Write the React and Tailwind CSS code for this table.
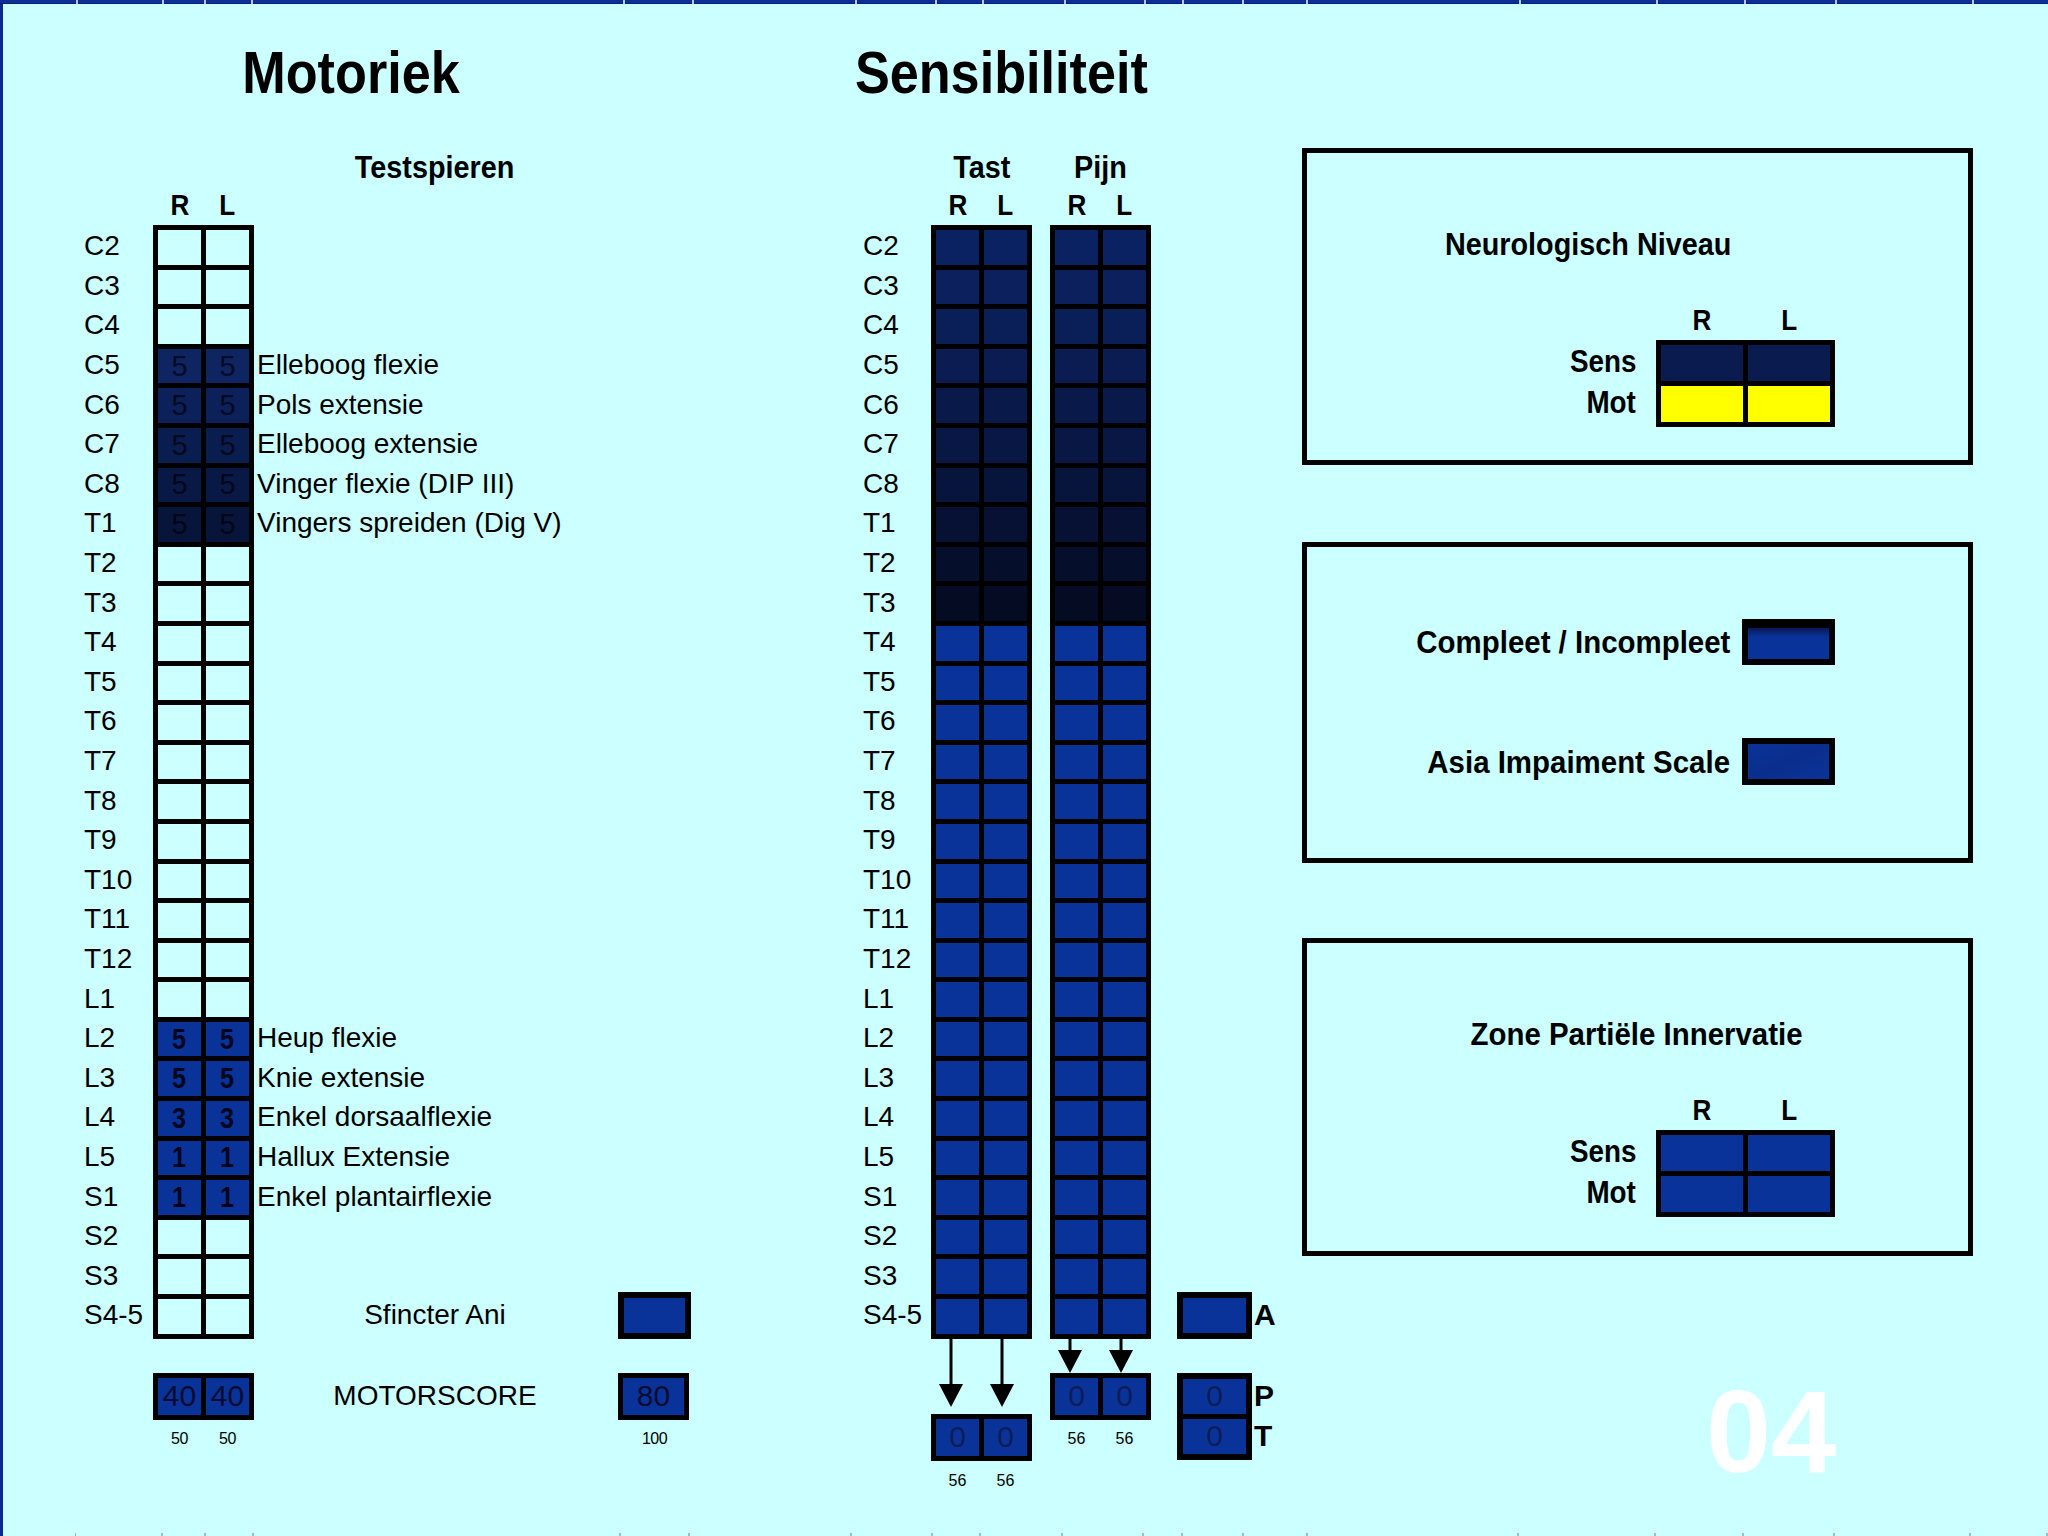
import React from 'react';

const BOLD = "font-['Liberation_Sans',Arial,sans-serif] font-bold";
const SANS = "font-['Liberation_Sans',Arial,sans-serif]";

const BLUE = 'bg-[#0a3399]';
const EMPTY = 'bg-[#ccffff]';

const LEVELS = [
  'C2', 'C3', 'C4', 'C5', 'C6', 'C7', 'C8',
  'T1', 'T2', 'T3', 'T4', 'T5', 'T6', 'T7', 'T8', 'T9', 'T10', 'T11', 'T12',
  'L1', 'L2', 'L3', 'L4', 'L5',
  'S1', 'S2', 'S3', 'S4-5',
];

// motor key muscles: value, name, cell colour
const MOTOR = {
  C5: { v: '5', name: 'Elleboog flexie', bg: 'bg-[#0e2562]', fg: 'text-[#040a26]' },
  C6: { v: '5', name: 'Pols extensie', bg: 'bg-[#0c2159]', fg: 'text-[#030922]' },
  C7: { v: '5', name: 'Elleboog extensie', bg: 'bg-[#0a1d4f]', fg: 'text-[#03081e]' },
  C8: { v: '5', name: 'Vinger flexie (DIP III)', bg: 'bg-[#081945]', fg: 'text-[#02061a]' },
  T1: { v: '5', name: 'Vingers spreiden (Dig V)', bg: 'bg-[#07153b]', fg: 'text-[#020516]' },
  L2: { v: '5', name: 'Heup flexie', bg: BLUE, fg: 'text-[#03061c]', bold: true },
  L3: { v: '5', name: 'Knie extensie', bg: BLUE, fg: 'text-[#03061c]', bold: true },
  L4: { v: '3', name: 'Enkel dorsaalflexie', bg: BLUE, fg: 'text-[#03061c]', bold: true },
  L5: { v: '1', name: 'Hallux Extensie', bg: BLUE, fg: 'text-[#03061c]', bold: true },
  S1: { v: '1', name: 'Enkel plantairflexie', bg: BLUE, fg: 'text-[#03061c]', bold: true },
};

// sensory cells get darker from C2 down to T3
const SENS_DARK = {
  C2: 'bg-[#0b2262]',
  C3: 'bg-[#0b205d]',
  C4: 'bg-[#0a1e57]',
  C5: 'bg-[#0a1c51]',
  C6: 'bg-[#09194a]',
  C7: 'bg-[#081743]',
  C8: 'bg-[#07143b]',
  T1: 'bg-[#061133]',
  T2: 'bg-[#050e2b]',
  T3: 'bg-[#040b23]',
};

// x positions of the little breaks in the top rule
const BREAKS = [76, 162, 204, 251, 623, 692, 855, 935, 982, 1064, 1144, 1182, 1242, 1306, 1519, 1656, 1744, 1835, 1972];

function segments() {
  const out = [];
  let prev = 0;
  BREAKS.forEach(b => {
    out.push(b - prev);
    prev = b + 2;
  });
  out.push(2048 - prev);
  return out;
}

// condensed bold text, squeezed horizontally like the original slide font
function Cond({ children, origin = 'origin-center', scale = 'scale-x-[0.87]' }) {
  return <span className={`inline-block ${scale} ${origin} whitespace-nowrap`}>{children}</span>;
}

function TopRule() {
  const segs = segments();
  return (
    <div className="flex h-[4px] w-[2048px] shrink-0 bg-[#b8c8dc] gap-[2px]">
      {segs.map((w, i) => (
        <div key={i} className="h-full bg-[#0b2f96] border-b border-[#06206e]" style={{ width: w }} />
      ))}
    </div>
  );
}

function BottomDots() {
  const segs = segments();
  return (
    <div className="flex h-[3px] w-[2048px] -ml-[3px] shrink-0 gap-[2px]">
      {segs.map((w, i) => (
        <React.Fragment key={i}>
          <div className="h-full" style={{ width: w - 2 }} />
          <div className="h-full w-[2px] bg-[#a9b9c4]" />
        </React.Fragment>
      ))}
    </div>
  );
}

function LevelLabels({ width }) {
  return (
    <div className={`${width} pt-[4px] flex flex-col gap-[5px]`}>
      {LEVELS.map(l => (
        <div key={l} className="h-[34.6px] flex items-center text-[28px] leading-none">{l}</div>
      ))}
    </div>
  );
}

function Grid({ rows }) {
  return (
    <div className="bg-black p-[5px] flex flex-col gap-[5px]">
      {rows.map((r, i) => (
        <div key={i} className="flex gap-[5px]">
          {r.map((c, j) => (
            <div
              key={j}
              className={`w-[43px] h-[34.6px] flex items-center justify-center text-[29px] leading-none ${c.bg} ${c.fg || ''} ${c.bold ? 'font-bold' : ''}`}
            >
              {c.bold ? <Cond>{c.v}</Cond> : c.v}
            </div>
          ))}
        </div>
      ))}
    </div>
  );
}

function ScoreBox({ values, width = 'w-[43px]', fg = 'text-[#060c30]' }) {
  return (
    <div className="bg-black p-[5px] flex gap-[5px]">
      {values.map((v, i) => (
        <div key={i} className={`${width} h-[37px] ${BLUE} flex items-center justify-center text-[30px] leading-none ${fg}`}>{v}</div>
      ))}
    </div>
  );
}

function MotorColumn() {
  const rows = LEVELS.map(l => {
    const m = MOTOR[l];
    const cell = m ? { v: m.v, bg: m.bg, fg: m.fg, bold: m.bold } : { v: '', bg: EMPTY };
    return [cell, cell];
  });

  return (
    <div className="ml-[81px] w-[702px] shrink-0 flex flex-col">
      <div className={`mt-[40px] w-[534px] text-center text-[60px] leading-[58px] ${BOLD}`}><Cond>Motoriek</Cond></div>
      <div className={`mt-[47px] text-center text-[32px] leading-[36px] ${BOLD}`}><Cond scale="scale-x-[0.9]">Testspieren</Cond></div>
      <div className={`mt-[5px] ml-[74px] flex gap-[5px] text-[30px] leading-[30px] ${BOLD}`}>
        <span className="w-[43px] text-center"><Cond>R</Cond></span>
        <span className="w-[43px] text-center"><Cond>L</Cond></span>
      </div>

      <div className="mt-[5px] flex items-start">
        <LevelLabels width="w-[69px]" />
        <Grid rows={rows} />
        <div className="pl-[3px] pt-[4px] flex flex-col gap-[5px]">
          {LEVELS.map(l => (
            <div key={l} className="h-[34.6px] flex items-center text-[28px] leading-none whitespace-nowrap">
              {l === 'S4-5' ? (
                <>
                  <span className="w-[356px] text-center">Sfincter Ani</span>
                  <div className="ml-[5px] w-[73px] h-[47px] bg-black p-[6px] shrink-0">
                    <div className={`w-full h-full ${BLUE}`} />
                  </div>
                </>
              ) : (
                MOTOR[l]?.name
              )}
            </div>
          ))}
        </div>
      </div>

      {/* motorscore */}
      <div className="mt-[34px] flex items-center">
        <div className="w-[69px]" />
        <ScoreBox values={['40', '40']} />
        <span className="ml-[3px] w-[356px] text-center text-[28px] leading-none">MOTORSCORE</span>
        <div className="ml-[5px]">
          <ScoreBox values={['80']} width="w-[61px]" />
        </div>
      </div>
      <div className="mt-[10px] flex text-[16px] leading-[18px] tracking-[-0.5px]">
        <div className="w-[74px]" />
        <span className="w-[43px] text-center">50</span>
        <span className="ml-[5px] w-[43px] text-center">50</span>
        <span className="ml-[369px] w-[73px] text-center">100</span>
      </div>
    </div>
  );
}

function Arrows({ height, base }) {
  return (
    <svg width="101" height={height} viewBox={`0 0 101 ${height}`} className="block">
      {[20, 71].map(x => (
        <g key={x}>
          <line x1={x} y1="0" x2={x} y2={base + 1} stroke="#000" strokeWidth="3" />
          <polygon points={`${x - 12},${base} ${x + 12},${base} ${x},${base + 23}`} fill="#000" />
        </g>
      ))}
    </svg>
  );
}

function SensoryColumn() {
  const rows = LEVELS.map(l => {
    const bg = SENS_DARK[l] || BLUE;
    return [{ v: '', bg }, { v: '', bg }];
  });

  return (
    <div className="ml-[77px] w-[417px] shrink-0 flex flex-col">
      <div className={`mt-[40px] w-[400px] -ml-[62px] text-center text-[60px] leading-[58px] ${BOLD}`}><Cond>Sensibiliteit</Cond></div>
      <div className={`mt-[47px] ml-[68px] flex gap-[18px] text-[32px] leading-[36px] ${BOLD}`}>
        <span className="w-[101px] text-center"><Cond scale="scale-x-[0.9]">Tast</Cond></span>
        <span className="w-[101px] text-center"><Cond scale="scale-x-[0.9]">Pijn</Cond></span>
      </div>
      <div className={`mt-[5px] ml-[73px] flex text-[30px] leading-[30px] ${BOLD}`}>
        <span className="w-[43px] text-center"><Cond>R</Cond></span>
        <span className="ml-[5px] w-[43px] text-center"><Cond>L</Cond></span>
        <span className="ml-[28px] w-[43px] text-center"><Cond>R</Cond></span>
        <span className="ml-[5px] w-[43px] text-center"><Cond>L</Cond></span>
      </div>

      <div className="mt-[5px] flex items-start">
        <LevelLabels width="w-[68px]" />
        <Grid rows={rows} />
        <div className="ml-[18px]">
          <Grid rows={rows} />
        </div>
        <div className="ml-[26px] self-end flex items-center">
          <div className="w-[75px] h-[47px] bg-black p-[6px]">
            <div className={`w-full h-full ${BLUE}`} />
          </div>
          <span className="ml-[2px] text-[30px] leading-none font-bold">A</span>
        </div>
      </div>

      {/* totals */}
      <div className="flex items-start">
        <div className="w-[68px]" />
        <div className="w-[101px] flex flex-col">
          <Arrows height={75} base={45} />
          <ScoreBox values={['0', '0']} fg="text-[#0c1c58]" />
          <div className="mt-[11px] px-[5px] flex gap-[5px] text-[16px] leading-[18px]">
            <span className="w-[43px] text-center">56</span>
            <span className="w-[43px] text-center">56</span>
          </div>
        </div>
        <div className="ml-[18px] w-[101px] flex flex-col">
          <Arrows height={34} base={11} />
          <ScoreBox values={['0', '0']} fg="text-[#0c1c58]" />
          <div className="mt-[10px] px-[5px] flex gap-[5px] text-[16px] leading-[18px]">
            <span className="w-[43px] text-center">56</span>
            <span className="w-[43px] text-center">56</span>
          </div>
        </div>
        <div className="ml-[26px] mt-[34px] flex">
          <div className="w-[75px] bg-black p-[6px] flex flex-col gap-[5px]">
            <div className={`h-[35px] ${BLUE} flex items-center justify-center text-[30px] leading-none text-[#0c1c58]`}>0</div>
            <div className={`h-[35px] ${BLUE} flex items-center justify-center text-[30px] leading-none text-[#0c1c58]`}>0</div>
          </div>
          <div className="ml-[2px] pt-[6px] flex flex-col gap-[5px] text-[30px] font-bold">
            <span className="h-[35px] flex items-center leading-none">P</span>
            <span className="h-[35px] flex items-center leading-none">T</span>
          </div>
        </div>
      </div>
    </div>
  );
}

function MiniGrid({ top, bottom }) {
  return (
    <>
      <div className={`mt-[43px] ml-[354px] flex gap-[5px] text-[30px] leading-[30px] ${BOLD}`}>
        <span className="w-[82px] text-center"><Cond>R</Cond></span>
        <span className="w-[82px] text-center"><Cond>L</Cond></span>
      </div>
      <div className="mt-[5px] flex">
        <div className={`w-[349px] pt-[3px] pr-[20px] flex flex-col gap-[5px] items-end text-[32px] ${BOLD}`}>
          <span className="h-[36px] flex items-center leading-none"><Cond origin="origin-right">Sens</Cond></span>
          <span className="h-[36px] flex items-center leading-none"><Cond origin="origin-right">Mot</Cond></span>
        </div>
        <div className="bg-black p-[5px] flex flex-col gap-[5px]">
          <div className="flex gap-[5px]">
            <div className={`w-[82px] h-[36px] ${top}`} />
            <div className={`w-[82px] h-[36px] ${top}`} />
          </div>
          <div className="flex gap-[5px]">
            <div className={`w-[82px] h-[36px] ${bottom}`} />
            <div className={`w-[82px] h-[36px] ${bottom}`} />
          </div>
        </div>
      </div>
    </>
  );
}

function Panels() {
  return (
    <div className="ml-[22px] mt-[144px] w-[671px] shrink-0 flex flex-col">
      <div className="h-[317px] border-[5px] border-black flex flex-col">
        <div className={`mt-[73px] w-[562px] text-center text-[32px] leading-[36px] ${BOLD}`}>
          <Cond scale="scale-x-[0.9]">Neurologisch Niveau</Cond>
        </div>
        <MiniGrid top="bg-[#0a1b4f]" bottom="bg-[#ffff00]" />
      </div>

      <div className="mt-[77px] h-[321px] border-[5px] border-black flex flex-col items-end pr-[133px]">
        <div className="mt-[72px] flex items-center gap-[12px]">
          <span className={`text-[32px] leading-none ${BOLD}`}>
            <Cond origin="origin-right" scale="scale-x-[0.92]">Compleet / Incompleet</Cond>
          </span>
          <div className="w-[93px] h-[46px] bg-black p-[6px] pt-[9px]">
            <div className="w-full h-full bg-gradient-to-b from-[#071a5a] to-[#0a3399] to-[30%]" />
          </div>
        </div>
        <div className="mt-[73px] flex items-center gap-[12px]">
          <span className={`text-[32px] leading-none ${BOLD}`}>
            <Cond origin="origin-right" scale="scale-x-[0.92]">Asia Impaiment Scale</Cond>
          </span>
          <div className="w-[93px] h-[47px] bg-black p-[6px]">
            <div className="w-full h-full bg-gradient-to-br from-[#0a3399] via-[#0a2e8c] to-[#0a3399]" />
          </div>
        </div>
      </div>

      <div className="mt-[75px] h-[318px] border-[5px] border-black flex flex-col">
        <div className={`mt-[73px] w-[660px] text-center text-[32px] leading-[36px] ${BOLD}`}>
          <Cond scale="scale-x-[0.92]">Zone Partiële Innervatie</Cond>
        </div>
        <MiniGrid top={BLUE} bottom={BLUE} />
      </div>

      <div className="mt-[117px] ml-[404px] text-white text-[117px] leading-[117px] font-bold">04</div>
    </div>
  );
}

export default function App() {
  return (
    <div className={`w-[2048px] h-[1536px] bg-[#ccffff] text-black flex flex-col overflow-hidden ${SANS}`}>
      <TopRule />
      <div className="flex-1 flex flex-col border-l-[3px] border-[#0a2a8c]">
        <div className="flex-1 flex items-start">
          <MotorColumn />
          <SensoryColumn />
          <Panels />
        </div>
        <BottomDots />
      </div>
    </div>
  );
}
